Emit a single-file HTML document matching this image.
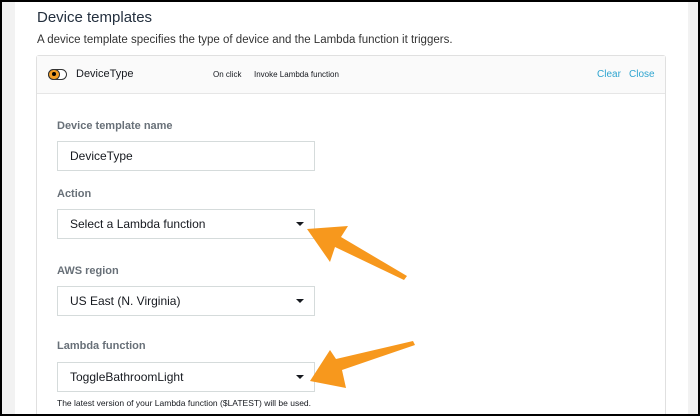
<!DOCTYPE html>
<html><head><style>
body{margin:0;width:700px;height:416px;overflow:hidden;font-family:"Liberation Sans",sans-serif;}
.frame{position:absolute;left:0;top:0;width:696px;height:412px;border:2px solid #000;background:#f2f2f2;overflow:hidden}
.main{position:absolute;left:13px;top:0;width:673px;height:412px;background:#fff}
.t{position:absolute;color:#16191f;white-space:nowrap}
.card{position:absolute;left:21px;top:53px;width:628px;height:370px;border:1px solid #e0e0e0;border-radius:3px;background:#fff}
.hdr{position:absolute;left:0;top:0;width:628px;height:37px;background:#fafafa;border-bottom:1px solid #e6e6e6}
.lbl{position:absolute;font-size:11px;color:#687078;font-weight:bold;left:20px}
.inp{position:absolute;left:20px;height:28px;border:1px solid #d5dbdb;font-size:12px;color:#16191f;line-height:28px;padding-left:12px;box-sizing:content-box;width:244px}
.car{position:absolute;right:10px;top:12px;width:0;height:0;border-left:4px solid transparent;border-right:4px solid transparent;border-top:4px solid #16191f}
</style></head><body>
<div class="frame"><div class="main">
<div class="t" style="left:22px;top:7px;font-size:15px;color:#232f3e">Device templates</div>
<div class="t" style="left:22px;top:32px;font-size:11.5px;color:#333">A device template specifies the type of device and the Lambda function it triggers.</div>
<div class="card">
 <div class="hdr">
  <div style="position:absolute;left:11px;top:13px;width:17px;height:9px;border:1px solid #333;border-radius:6px;background:#fff"></div>
  <div style="position:absolute;left:11px;top:13px;width:10px;height:9px;border:1px solid #333;border-radius:6px;background:#f29d25"></div>
  <div style="position:absolute;left:15px;top:16px;width:4px;height:4px;border-radius:50%;background:#000"></div>
  <div class="t" style="left:39px;top:12px;font-size:11px">DeviceType</div>
  <div class="t" style="left:176px;top:14px;font-size:8px">On click</div>
  <div class="t" style="left:217px;top:14px;font-size:8px">Invoke Lambda function</div>
  <div class="t" style="left:560px;top:13px;font-size:10px;color:#2fa5d0">Clear</div>
  <div class="t" style="left:592px;top:13px;font-size:10px;color:#2fa5d0">Close</div>
 </div>
 <div class="lbl" style="top:64px">Device template name</div>
 <div class="inp" style="top:85px">DeviceType</div>
 <div class="lbl" style="top:132px">Action</div>
 <div class="inp" style="top:153px">Select a Lambda function<div class="car"></div></div>
 <div class="lbl" style="top:209px">AWS region</div>
 <div class="inp" style="top:230px">US East (N. Virginia)<div class="car"></div></div>
 <div class="lbl" style="top:284px">Lambda function</div>
 <div class="inp" style="top:306px">ToggleBathroomLight<div class="car"></div></div>
 <div class="t" style="left:20px;top:342px;font-size:8.5px;color:#16191f">The latest version of your Lambda function ($LATEST) will be used.</div>
</div>
</div></div>
<svg style="position:absolute;left:0;top:0" width="700" height="416">
<polygon fill="#f7981d" points="307,229 348,226 341,237 407,276 404,280 335,247 330,262"/>
<polygon fill="#f7981d" points="310,381 330,350 336,359 413,341 415,345 342,370 346,388"/>
</svg>
</body></html>
